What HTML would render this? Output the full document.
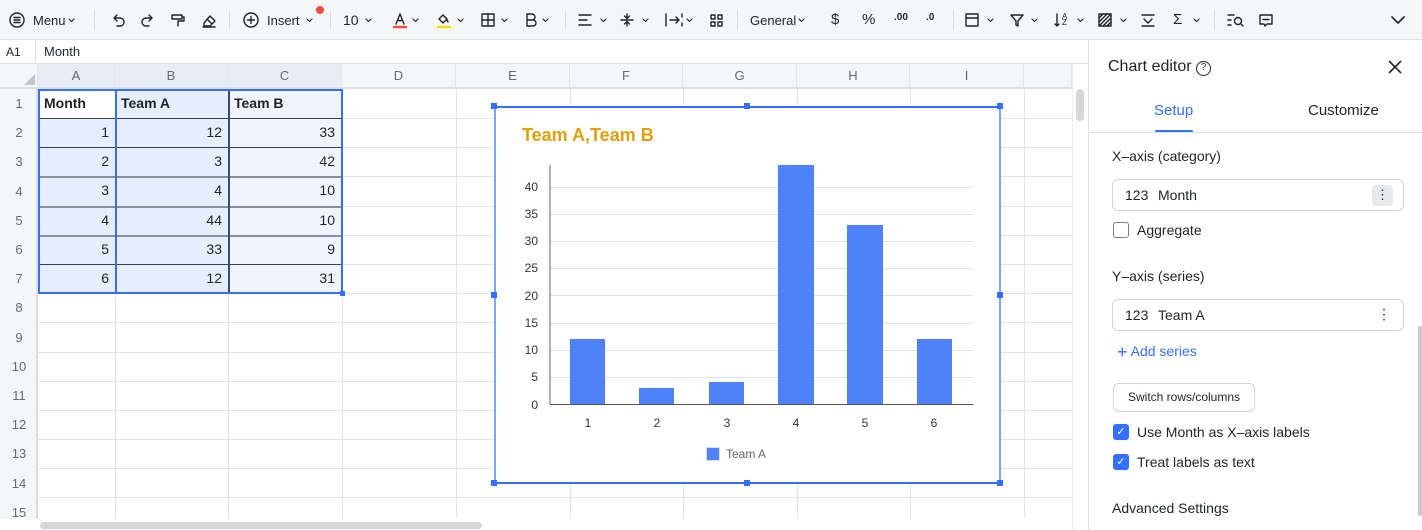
<!DOCTYPE html>
<html><head><meta charset="utf-8"><style>
*{box-sizing:border-box;margin:0;padding:0}
body{width:1422px;height:530px;overflow:hidden;background:#fff;font-family:"Liberation Sans",Arial,sans-serif;color:#1f2329;position:relative}
.a{position:absolute}
.tb{left:0;top:0;width:1422px;height:40px;background:#f5f6f7;border-bottom:1px solid #dee0e3;font-size:13px;color:#1f2329}
.tb span{position:absolute;top:13px;white-space:nowrap}
.ch{top:64px;height:25px;background:#f5f6f7;border-bottom:2px solid #dcdde0;font-size:13px;color:#646a73;text-align:center;line-height:24px;border-right:1px solid #e4e5e7}
.rh{left:0;width:38px;background:#f5f6f7;font-size:13px;color:#646a73;text-align:center;border-right:2px solid #dcdde0}
.vl{top:89px;width:1px;height:430px;background:#e4e5e7}
.hl{left:38px;width:1034px;height:1px;background:#e4e5e7}
.p{font-size:14px}
.box{border:1px solid #d0d3d6;border-radius:6px;background:#fff}
.chk{width:16px;height:16px;border-radius:3px}
</style></head><body>
<!-- toolbar -->
<div class="a tb">
<span style="left:33px">Menu</span>
<span style="left:267px">Insert</span>
<span style="left:343px;font-size:14px;top:12px">10</span>
<span style="left:750px">General</span>
<span style="left:831px;font-size:15px;top:11px">$</span>
<span style="left:862px;font-size:15px;top:11px">%</span>
<span style="left:894px;font-size:10px;top:12px;font-weight:bold">.00</span>
<span style="left:926px;font-size:10px;top:12px;font-weight:bold">.0</span>
<span style="left:1173px;font-size:15px;top:11px">Σ</span>
<svg class="a" style="left:0;top:0" width="1422" height="40" fill="none" stroke="#1f2329" stroke-width="1.4" stroke-linecap="round" stroke-linejoin="round">
<circle cx="17" cy="20" r="7"/><path d="M14 17.5h6M14 20h6M14 22.5h6"/>
<path d="M117 15l-3 3 3 3M114 18h6a4 4 0 0 1 0 8h-3"/>
<path d="M149 15l3 3-3 3M152 18h-6a4 4 0 0 0 0 8h3"/>
<path d="M172 15h10v4h-10zM182 17h2v4h-6v5"/>
<path d="M204 23l6-7 5 5-5 5h-6v-3zM207 19l5 5M203 27h12"/>
<circle cx="251" cy="20" r="7"/><path d="M251 16.5v7M247.5 20h7"/>
<path d="M396 24l4-10 4 10M397.5 20.5h5"/><path d="M394 27h12" stroke="#f54a45" stroke-width="2.5"/>
<path d="M439 19l4-4 4 4-4 4zM447 20l1 2"/><path d="M438 27h12" stroke="#f5e000" stroke-width="2.5"/>
<rect x="482" y="14" width="12" height="12"/><path d="M488 14v12M482 20h12"/>
<path d="M527 14h5a3 3 0 0 1 0 6h-5zM527 20h6a3 3 0 0 1 0 6h-6z"/>
<path d="M579 15h12M579 20h8M579 25h12"/>
<path d="M621 20h12M627 14v4M624.5 16l2.5 2.5 2.5-2.5M627 26v-4M624.5 24l2.5-2.5 2.5 2.5"/>
<path d="M666 14v12M670 20h9M676 17l3 3-3 3M682 14v3M682 23v3"/>
<path d="M711 15h4v4h-4zM718 15h4v4h-4zM711 22h4v4h-4zM718 22h4v4h-4z"/>
<rect x="966" y="14" width="12" height="12"/><path d="M966 18h12"/>
<path d="M1011 15h12l-5 6v5l-2-1v-4z"/>
<path d="M1057 14v12M1055 24l2 2 2-2"/>
<rect x="1099" y="14" width="12" height="12"/><path d="M1103 14l-4 4M1107 14l-8 8M1111 14l-12 12M1111 18l-8 8M1111 22l-4 4"/>
<path d="M1142 15h12M1144 19l4 4 4-4M1142 26h12"/>
<path d="M1228 15h6M1228 20h3M1228 25h3"/><circle cx="1238" cy="21" r="3.5"/><path d="M1241 24l2 2"/>
<path d="M1260 15h12v9h-5l-2 2-1-2h-4z"/><path d="M1263 19.5h6"/>
<path d="M1392 17l6 6 6-6" stroke-width="1.6"/>
<g stroke-width="1.1"><path d="M69 19l2.5 2.5 2.5-2.5M307 19l2.5 2.5 2.5-2.5M366 19l2.5 2.5 2.5-2.5M413 19l2.5 2.5 2.5-2.5M458 19l2.5 2.5 2.5-2.5M502 19l2.5 2.5 2.5-2.5M543 19l2.5 2.5 2.5-2.5M601 19l2.5 2.5 2.5-2.5M643 19l2.5 2.5 2.5-2.5M687 19l2.5 2.5 2.5-2.5M799 19l2.5 2.5 2.5-2.5M988 19l2.5 2.5 2.5-2.5M1032 19l2.5 2.5 2.5-2.5M1078 19l2.5 2.5 2.5-2.5M1121 19l2.5 2.5 2.5-2.5M1194 19l2.5 2.5 2.5-2.5"/></g>
<g stroke="#dcdde0" stroke-width="1"><path d="M94.5 11v18M229.5 11v18M330.5 11v18M565.5 11v18M737.5 11v18M953.5 11v18M1214.5 11v18"/></g>
<circle cx="320" cy="10" r="4" fill="#f54a45" stroke="none"/>
</svg>
<span style="left:1062px;top:14px;font-size:8px;line-height:6px">A<br>Z</span>
</div>
<!-- formula bar -->
<div class="a" style="left:0;top:40px;width:1088px;height:24px;border-bottom:1px solid #dee0e3;font-size:13px"><span class="a" style="left:6px;top:5px;font-size:12px">A1</span><div class="a" style="left:35px;top:0;width:1px;height:24px;background:#dee0e3"></div><span class="a" style="left:44px;top:4px">Month</span></div>
<!-- column headers -->
<div class="a ch" style="left:0;width:38px"><div class="a" style="left:24px;top:10px;width:0;height:0;border-left:11px solid transparent;border-bottom:11px solid #c4c6ca"></div></div>
<div class="a ch" style="left:38px;width:77px;background:#e8ecf4">A</div>
<div class="a ch" style="left:115px;width:113px;background:#e8ecf4">B</div>
<div class="a ch" style="left:228px;width:114px;background:#e8ecf4">C</div>
<div class="a ch" style="left:342px;width:114px">D</div>
<div class="a ch" style="left:456px;width:114px">E</div>
<div class="a ch" style="left:570px;width:113px">F</div>
<div class="a ch" style="left:683px;width:114px">G</div>
<div class="a ch" style="left:797px;width:113px">H</div>
<div class="a ch" style="left:910px;width:114px">I</div>
<div class="a ch" style="left:1024px;width:48px"></div>
<!-- row header -->
<div class="a rh" style="top:89px;height:430px"></div>
<div class="a" style="left:0;top:89px;width:38px;font-size:13px;color:#646a73;text-align:center;line-height:29.2px">1<br>2<br>3<br>4<br>5<br>6<br>7<br>8<br>9<br>10<br>11<br>12<br>13<br>14<br>15</div>
<!-- grid lines -->
<div class="a vl" style="left:115px"></div><div class="a vl" style="left:228px"></div><div class="a vl" style="left:342px"></div><div class="a vl" style="left:456px"></div><div class="a vl" style="left:570px"></div><div class="a vl" style="left:683px"></div><div class="a vl" style="left:797px"></div><div class="a vl" style="left:910px"></div><div class="a vl" style="left:1024px"></div>
<div class="a hl" style="top:118px"></div><div class="a hl" style="top:147px"></div><div class="a hl" style="top:176px"></div><div class="a hl" style="top:206px"></div><div class="a hl" style="top:235px"></div><div class="a hl" style="top:264px"></div><div class="a hl" style="top:293px"></div><div class="a hl" style="top:322px"></div><div class="a hl" style="top:352px"></div><div class="a hl" style="top:381px"></div><div class="a hl" style="top:410px"></div><div class="a hl" style="top:439px"></div><div class="a hl" style="top:468px"></div><div class="a hl" style="top:497px"></div>
<!-- data selection -->
<div class="a" style="left:38px;top:89px;width:305px;height:205px;background:#f0f4fe"></div>
<div class="a" style="left:38px;top:118px;width:78px;height:176px;background:#e6eefd"></div>
<div class="a" style="left:115px;top:89px;width:114px;height:205px;background:#e6eefd"></div>
<div class="a" style="left:38px;top:89px;width:78px;height:30px;background:#fff"></div>
<div class="a" style="left:38px;top:118px;width:305px;height:1px;background:#3b3f46"></div>
<div class="a" style="left:38px;top:147px;width:305px;height:1px;background:#3b3f46"></div>
<div class="a" style="left:38px;top:176px;width:305px;height:2px;background:#8a8f99"></div>
<div class="a" style="left:38px;top:206px;width:305px;height:2px;background:#8a8f99"></div>
<div class="a" style="left:38px;top:235px;width:305px;height:2px;background:#8a8f99"></div>
<div class="a" style="left:38px;top:264px;width:305px;height:1px;background:#3b3f46"></div>
<div class="a" style="left:115px;top:89px;width:2px;height:205px;background:#3b6fe0"></div>
<div class="a" style="left:228px;top:89px;width:2px;height:205px;background:#3b4a70"></div>
<div class="a" style="left:38px;top:89px;width:305px;height:205px;border:2px solid #3370ff"></div>
<div class="a" style="left:340px;top:291px;width:5px;height:5px;background:#3370ff"></div>
<div class="a" style="left:38px;top:89px;width:305px;font-size:14px">
<div style="display:flex;height:29px;line-height:29px;font-weight:bold"><div style="width:77px;padding-left:6px">Month</div><div style="width:113px;padding-left:6px">Team A</div><div style="padding-left:6px">Team B</div></div>
<div style="display:flex;line-height:29.2px;text-align:right">
<div style="width:77px;padding-right:6px">1<br>2<br>3<br>4<br>5<br>6</div>
<div style="width:113px;padding-right:6px">12<br>3<br>4<br>44<br>33<br>12</div>
<div style="width:113px;padding-right:6px">33<br>42<br>10<br>10<br>9<br>31</div></div>
</div>
<!-- scrollbars -->
<div class="a" style="left:38px;top:518px;width:1050px;height:12px;background:#fff"></div>
<div class="a" style="left:40px;top:522px;width:442px;height:7px;border-radius:4px;background:#d5d7da"></div>
<div class="a" style="left:1072px;top:64px;width:16px;height:466px;background:#fff;border-left:1px solid #eee"></div>
<div class="a" style="left:1076px;top:89px;width:8px;height:32px;border-radius:4px;background:#d5d7da"></div>
<!-- chart -->
<div class="a" style="left:494px;top:106px;width:507px;height:378px;background:#fff;border:2px solid #3370ff;border-left-color:#7fa5fb;border-right-color:#7fa5fb"></div>
<svg class="a" style="left:0;top:0" width="1088" height="530">
<g fill="#3370ff"><rect x="491" y="103" width="6" height="6"/><rect x="744" y="103" width="6" height="6"/><rect x="997" y="103" width="6" height="6"/><rect x="491" y="292" width="6" height="6"/><rect x="997" y="292" width="6" height="6"/><rect x="491" y="480" width="6" height="6"/><rect x="744" y="480" width="6" height="6"/><rect x="997" y="480" width="6" height="6"/></g>
<text x="522" y="141" font-family="Liberation Sans" font-weight="bold" font-size="18" fill="#e1a00b">Team A,Team B</text>
<g stroke="#e0e2e5" stroke-width="1"><line x1="550" x2="973" y1="187.5" y2="187.5"/><line x1="550" x2="973" y1="214.5" y2="214.5"/><line x1="550" x2="973" y1="241.5" y2="241.5"/><line x1="550" x2="973" y1="268.5" y2="268.5"/><line x1="550" x2="973" y1="295.5" y2="295.5"/><line x1="550" x2="973" y1="323.5" y2="323.5"/><line x1="550" x2="973" y1="350.5" y2="350.5"/><line x1="550" x2="973" y1="377.5" y2="377.5"/></g>
<g fill="#4f81f9"><rect x="570" y="339" width="35" height="65"/><rect x="639" y="388" width="35" height="16"/><rect x="709" y="382" width="35" height="22"/><rect x="778" y="165" width="36" height="239"/><rect x="847" y="225" width="36" height="179"/><rect x="917" y="339" width="35" height="65"/></g>
<line x1="550" y1="165" x2="550" y2="404" stroke="#999" stroke-width="1.5"/>
<line x1="550" y1="404.5" x2="973" y2="404.5" stroke="#555" stroke-width="1"/>
<g font-family="Liberation Sans" font-size="12" fill="#333" text-anchor="end"><text x="538" y="191">40</text><text x="538" y="218">35</text><text x="538" y="245">30</text><text x="538" y="272">25</text><text x="538" y="300">20</text><text x="538" y="327">15</text><text x="538" y="354">10</text><text x="538" y="381">5</text><text x="538" y="409">0</text></g>
<g font-family="Liberation Sans" font-size="12" fill="#333" text-anchor="middle"><text x="588" y="427">1</text><text x="657" y="427">2</text><text x="727" y="427">3</text><text x="796" y="427">4</text><text x="865" y="427">5</text><text x="934" y="427">6</text></g>
<rect x="706.5" y="447.5" width="13" height="13" fill="#4f81f9" stroke="#dde" stroke-width="1"/>
<text x="726" y="458" font-family="Liberation Sans" font-size="12" fill="#666">Team A</text>
</svg>
<!-- panel -->
<div class="a" style="left:1088px;top:40px;width:334px;height:490px;background:#fff;border-left:1px solid #dee0e3">
<div class="a" style="left:19px;top:18px;font-size:16px">Chart editor <span style="display:inline-block;width:15px;height:15px;border:1.5px solid #1f2329;border-radius:50%;font-size:10px;text-align:center;line-height:12px;vertical-align:1px">?</span></div>
<svg class="a" style="left:299px;top:20px" width="14" height="14" stroke="#1f2329" stroke-width="1.6"><path d="M1 1l12 12M13 1L1 13"/></svg>
<div class="a" style="left:65px;top:62px;font-size:15px;color:#3370ff">Setup</div>
<div class="a" style="left:219px;top:62px;font-size:15px">Customize</div>
<div class="a" style="left:66px;top:90px;width:38px;height:3px;background:#3370ff;border-radius:2px"></div>
<div class="a" style="left:0;top:92px;width:334px;height:1px;background:#dee0e3"></div>
<div class="a p" style="left:23px;top:108px">X–axis (category)</div>
<div class="a box" style="left:23px;top:139px;width:292px;height:32px"><span class="a" style="left:12px;top:7px;font-size:14px">123</span><span class="a p" style="left:45px;top:7px">Month</span><div class="a" style="left:259px;top:5px;width:21px;height:21px;background:#e8e9eb;border-radius:4px;text-align:center;font-size:13px;line-height:20px">⋮</div></div>
<div class="a chk" style="left:24px;top:182px;border:1.5px solid #7a7f87"></div>
<div class="a p" style="left:48px;top:182px">Aggregate</div>
<div class="a p" style="left:23px;top:228px">Y–axis (series)</div>
<div class="a box" style="left:23px;top:259px;width:292px;height:32px"><span class="a" style="left:12px;top:7px;font-size:14px">123</span><span class="a p" style="left:45px;top:7px">Team A</span><span class="a" style="left:264px;top:6px;font-size:14px">⋮</span></div>
<div class="a p" style="left:28px;top:302px;color:#3370ff"><span style="font-size:18px;vertical-align:-2px">+</span> Add series</div>
<div class="a box" style="left:24px;top:343px;width:142px;height:29px;font-size:12px;line-height:27px;text-align:center">Switch rows/columns</div>
<div class="a chk" style="left:24px;top:384px;background:#3370ff;color:#fff;font-size:11px;text-align:center;line-height:16px">✓</div>
<div class="a p" style="left:48px;top:384px">Use Month as X–axis labels</div>
<div class="a chk" style="left:24px;top:414px;background:#3370ff;color:#fff;font-size:11px;text-align:center;line-height:16px">✓</div>
<div class="a p" style="left:48px;top:414px">Treat labels as text</div>
<div class="a p" style="left:23px;top:460px">Advanced Settings</div>
<div class="a" style="left:329px;top:286px;width:4px;height:190px;background:#c9cbce;border-radius:2px"></div>
</div>
</body></html>
